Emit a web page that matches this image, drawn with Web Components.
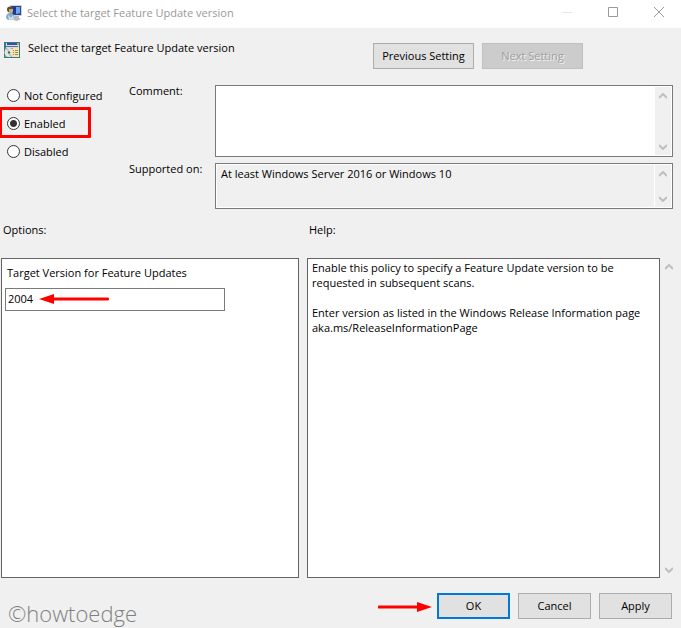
<!DOCTYPE html>
<html lang="en">
<head>
<meta charset="utf-8">
<meta name="viewport" content="width=device-width, initial-scale=1">
<title>Select the target Feature Update version</title>
<style>
  body { margin: 0; background: #f0f0f0; color: #000; font: 11px/15px "Open Sans", "Noto Sans", sans-serif; }
</style>
</head>
<body>
<policy-dialog></policy-dialog>
<script>
const define = (name, html, setup) => {
  const tpl = document.createElement('template');
  tpl.innerHTML = '<style>*{box-sizing:border-box}</style>' + html;
  customElements.define(name, class extends HTMLElement {
    constructor() {
      super();
      this.attachShadow({ mode: 'open' }).append(tpl.content.cloneNode(true));
    }
    connectedCallback() { if (setup) setup(this, this.shadowRoot); }
  });
};

define('title-bar', `
<style>
  :host { display: flex; height: 28px; align-items: center; background: #fff; color: #999; padding-left: 6px; gap: 5px; }
  h1 { font: inherit; margin: 0; flex: 1; white-space: nowrap; padding-bottom: 4px; }
  .logo { width: 16px; height: 16px; flex: none; margin-bottom: 3px; }
  .controls { display: flex; }
  button { width: 46px; height: 28px; border: 0; padding: 0 0 4px 2px; background: none; display: grid; place-items: center; color: #999; }
  button:disabled { color: #e6e6e6; }
</style>
<svg class="logo" viewBox="0 0 16 16" aria-hidden="true">
  <path d="M4 0h12v11H5z" fill="#d0d0cc"/>
  <path d="M5 1h10v9H5z" fill="#2448a4"/>
  <path d="M10 2h4v6l-4 1z" fill="#6fa4ea"/>
  <path d="M7 2h3v7H7z" fill="#1c3790"/>
  <path d="M9 11h4v2l2 1-4 2-4-1z" fill="#b9b9b4"/>
  <circle cx="4" cy="4.500" r="3" fill="#5f5136"/>
  <path d="M3 4h4v3L5 9 3 7z" fill="#c9ab6e"/>
  <path d="M0 13q0-5 4-5t5 5l-3 2H2z" fill="#84acca"/>
  <path d="M2 10l3 3 2-3 1 4-5 1z" fill="#cfe3ee"/>
</svg>
<h1><slot></slot></h1>
<div class="controls">
  <button disabled aria-label="Minimize"><svg width="10" height="10"><path d="M0 5.500h10" stroke="currentColor"/></svg></button>
  <button aria-label="Maximize"><svg width="10" height="10"><path d="M.5.5h9v9h-9z" fill="none" stroke="currentColor"/></svg></button>
  <button aria-label="Close"><svg width="10" height="10"><path d="M0 0l10 10M10 0L0 10" fill="none" stroke="currentColor"/></svg></button>
</div>`);

define('push-button', `
<style>
  :host { display: block; width: 73px; }
  :host([wide]) { width: 101px; }
  button { width: 100%; height: 26px; padding: 0 0 2px; border: 1px solid #adadad; background: #e1e1e1; color: #000; font: inherit; white-space: nowrap; }
  :host([primary]) button { border: 2px solid #0078d7; }
  button:disabled { background: #ccc; border-color: #bfbfbf; color: #a0a0a0; text-shadow: 1px 1px #f4f4f4; }
</style>
<button type="button"><slot></slot></button>`,
(el, root) => { root.querySelector('button').disabled = el.hasAttribute('disabled'); });

define('scroll-rail', `
<style>
  :host { display: flex; flex-direction: column; justify-content: space-between; width: 16px; background: #f0f0f0; color: #bfbfbf; }
  button { border: 0; padding: 0; width: 100%; height: 17px; background: none; color: inherit; display: grid; place-items: center; }
</style>
<button type="button" disabled aria-label="Scroll up"><svg width="8" height="6"><path d="M0 5l4-4 4 4" fill="none" stroke="currentColor" stroke-width="2"/></svg></button>
<button type="button" disabled aria-label="Scroll down"><svg width="8" height="6"><path d="M0 1l4 4 4-4" fill="none" stroke="currentColor" stroke-width="2"/></svg></button>`);

define('red-arrow', `
<style>
  :host { display: block; width: 70px; height: 10px; }
  :host([right]) { width: 54px; transform: rotate(180deg); }
  svg { display: block; width: 100%; height: 10px; }
</style>
<svg aria-hidden="true"><path d="M0 5l15-5v10z" fill="#f00"/><line x1="12" y1="5" x2="98%" y2="5" stroke="#f00" stroke-width="3" stroke-linecap="round"/></svg>`);

define('policy-state', `
<style>
  :host { display: block; }
  fieldset { border: 0; margin: 0; padding: 0; min-width: 0; }
  label { position: relative; display: flex; align-items: center; gap: 4px; height: 28px; padding-left: 7px; white-space: nowrap; }
  input { appearance: none; width: 13px; height: 13px; flex: none; margin: 0; border: 1px solid #333; border-radius: 50%; background: #fff; }
  input:checked { background: radial-gradient(circle, #333 0 3px, #fff 4px); }
  .mark { position: absolute; left: -1px; top: -2px; width: 92px; height: 31px; border: 3px solid #f00; border-radius: 1px; }
</style>
<fieldset aria-label="Policy state">
  <label><input type="radio" name="state">Not Configured</label>
  <label><input type="radio" name="state" checked>Enabled<span class="mark"></span></label>
  <label><input type="radio" name="state">Disabled</label>
</fieldset>`);

define('policy-details', `
<style>
  :host { display: grid; grid-template-columns: 86px minmax(0, 1fr); row-gap: 6px; }
  label { margin-top: -2px; }
  .box { display: flex; border: 1px solid #7a7a7a; background: #fff; padding: 1px; height: 72px; }
  .short { height: 46px; }
  textarea { flex: 1; min-width: 0; border: 0; outline: 0; margin: 0; padding: 1px 4px; resize: none; overflow: hidden; font: inherit; color: inherit; background: #fff; }
  .short textarea { background: #f0f0f0; margin-right: 1px; }
</style>
<label for="c">Comment:</label>
<div class="box"><textarea id="c"></textarea><scroll-rail></scroll-rail></div>
<label for="s">Supported on:</label>
<div class="box short"><textarea id="s" readonly>At least Windows Server 2016 or Windows 10</textarea><scroll-rail></scroll-rail></div>`);

define('options-panel', `
<style>
  :host { display: block; border: 1px solid #646464; background: #fff; padding: 6px 3px; }
  label { display: block; padding-left: 2px; margin-bottom: 8px; white-space: nowrap; }
  .field { position: relative; max-width: 220px; }
  input { display: block; width: 100%; height: 23px; border: 1px solid #7a7a7a; padding: 0 2px 2px; font: inherit; color: inherit; outline: 0; background: #fff; }
  red-arrow { position: absolute; left: 34px; top: 6px; }
</style>
<label for="v">Target Version for Feature Updates</label>
<div class="field"><input id="v" value="2004"><red-arrow></red-arrow></div>`);

define('help-panel', `
<style>
  :host { display: flex; min-width: 0; }
  .text { flex: 1; min-width: 0; border: 1px solid #646464; background: #fff; padding: 1px 4px; }
  ::slotted(p) { margin: 0 0 15px; }
  scroll-rail { width: 21px; padding-right: 3px; }
</style>
<div class="text"><slot></slot></div>
<scroll-rail></scroll-rail>`);

define('policy-dialog', `
<style>
  :host { display: flex; flex-direction: column; min-height: 100vh; background: #f0f0f0; }
  header { display: flex; align-items: flex-start; padding: 14px 98px 0 4px; height: 57px; gap: 8px; }
  header svg { flex: none; width: 16px; height: 16px; }
  h2 { font: inherit; margin: 0; flex: 1; white-space: nowrap; line-height: 12px; }
  .actions { display: flex; gap: 8px; padding-top: 1px; }
  .settings { display: grid; grid-template-columns: 129px minmax(0, 1fr); padding-right: 8px; }
  policy-state { margin-top: -4px; }
  .heads, .panels { display: grid; grid-template-columns: minmax(0, 298fr) minmax(0, 374fr); column-gap: 8px; padding-left: 1px; }
  .heads { padding-top: 13px; height: 49px; }
  .heads h3 { font: inherit; margin: 0; padding-left: 2px; }
  .panels { flex: 1; }
  footer { display: flex; align-items: flex-start; justify-content: flex-end; gap: 8px; padding: 15px 9px 0 8px; }
  footer red-arrow { margin: 9px -3px 0 0; }
  .credit { margin: 5px auto 0 0; font-size: 22px; line-height: 30px; font-weight: 300; color: #808080; }
</style>
<title-bar>Select the target Feature Update version</title-bar>
<header>
  <svg viewBox="0 0 16 16" aria-hidden="true">
    <path d="M0 0h16v16H0z" fill="#2f7f86"/>
    <path d="M2 1h13v5H2z" fill="#d9dadd"/>
    <path d="M3 1h11v2H3z" fill="#34509e"/>
    <path d="M13 1h2v2h-2z" fill="#d9a34e"/>
    <path d="M2 4h12v1H2z" fill="#5a6f96"/>
    <path d="M1 6h14v9H1z" fill="#9a9a86"/>
    <circle cx="5" cy="10.500" r="4.500" fill="#e4e6e2"/>
    <path d="M5 10.500L2 7h3zM5 10.500L8 14H5z" fill="#b9cdbd"/>
    <circle cx="5" cy="10.500" r="1.200" fill="#59666a"/>
    <path d="M9 6h6v9H8V8z" fill="#f6e3ae"/>
    <path d="M9 8h1m1 0h3M9 10h1m1 0h3M9 12h1m1 0h3" transform="translate(0 .5)" stroke="#b08a48"/>
  </svg>
  <h2>Select the target Feature Update version</h2>
  <div class="actions">
    <push-button wide>Previous Setting</push-button>
    <push-button wide disabled>Next Setting</push-button>
  </div>
</header>
<div class="settings"><policy-state></policy-state><policy-details></policy-details></div>
<div class="heads"><h3>Options:</h3><h3>Help:</h3></div>
<div class="panels">
  <options-panel></options-panel>
  <help-panel>
    <p>Enable this policy to specify a Feature Update version to be requested in subsequent scans.</p>
    <p>Enter version as listed in the Windows Release Information page aka.ms/ReleaseInformationPage</p>
  </help-panel>
</div>
<footer>
  <div class="credit">©howtoedge</div>
  <red-arrow right></red-arrow>
  <push-button primary>OK</push-button>
  <push-button>Cancel</push-button>
  <push-button>Apply</push-button>
</footer>`);
</script>
</body>
</html>
